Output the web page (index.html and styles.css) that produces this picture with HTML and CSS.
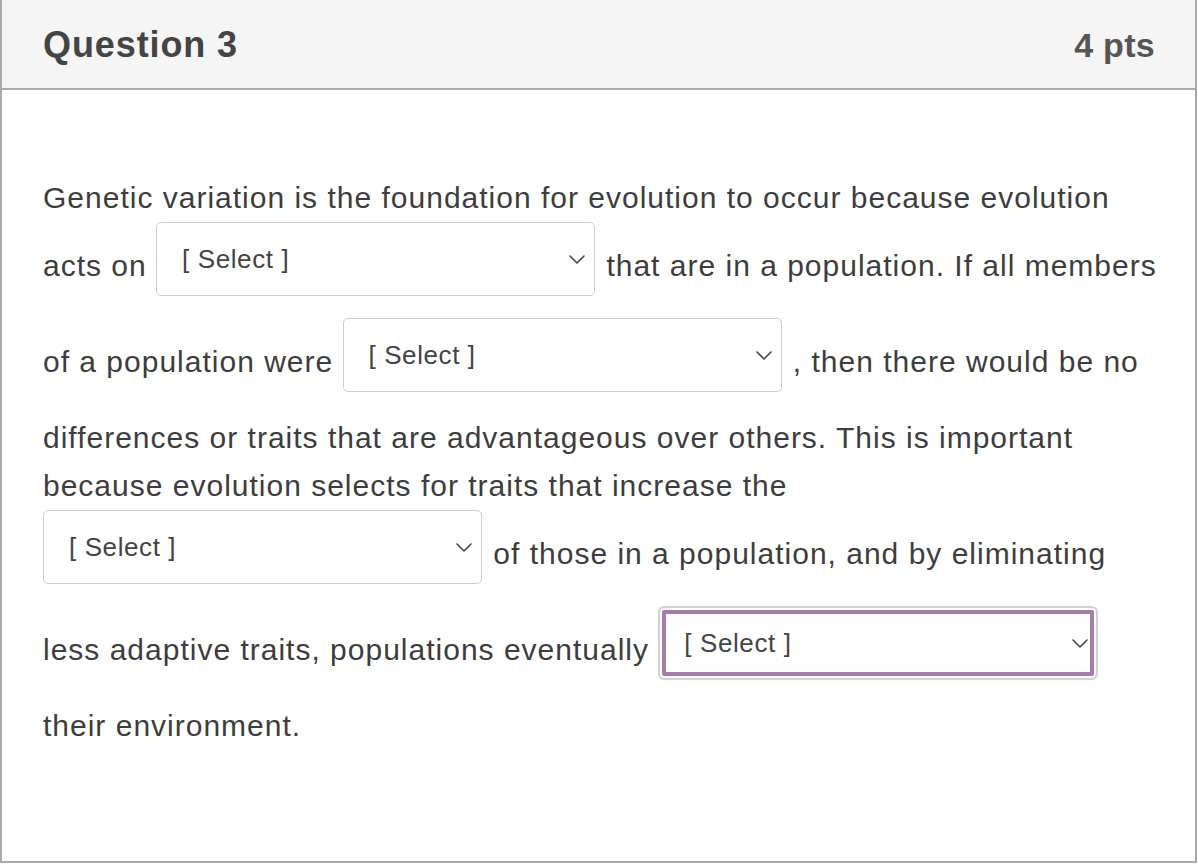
FILE: index.html
```html
<!DOCTYPE html>
<html lang="en">
<head>
<meta charset="utf-8">
<title>Question 3</title>
<link rel="stylesheet" href="styles.css">
</head>
<body>
<div class="card">
  <div class="card-header">
    <h2 class="title">Question 3</h2>
    <span class="pts">4 pts</span>
  </div>
  <div class="card-body">
    <p class="question">Genetic variation is the foundation for evolution to occur because evolution acts on <span class="select"><span class="select-text">[ Select ]</span><svg class="chev" viewBox="0 0 16 9" width="16" height="9"><polyline points="1,1 8,8 15,1"/></svg></span> that are in a population. If all members of a population were <span class="select"><span class="select-text">[ Select ]</span><svg class="chev" viewBox="0 0 16 9" width="16" height="9"><polyline points="1,1 8,8 15,1"/></svg></span> , then there would be no differences or traits that are advantageous over others. This is important because evolution selects for traits that increase the <span class="select"><span class="select-text">[ Select ]</span><svg class="chev" viewBox="0 0 16 9" width="16" height="9"><polyline points="1,1 8,8 15,1"/></svg></span> of those in a population, and by eliminating less adaptive traits, populations eventually <span class="select focused"><span class="select-text">[ Select ]</span><svg class="chev" viewBox="0 0 16 9" width="16" height="9"><polyline points="1,1 8,8 15,1"/></svg></span> their environment.</p>
  </div>
</div>
</body>
</html>
```
FILE: styles.css
```css
html, body {
  margin: 0;
  padding: 0;
  background: #ffffff;
}

body {
  font-family: "Liberation Sans", Arial, sans-serif;
  color: #3d3d3d;
}

.card {
  box-sizing: border-box;
  width: 1197px;
  height: 863px;
  border: 2px solid #aaaaaa;
  border-top: none;
  background: #ffffff;
}

.card-header {
  box-sizing: border-box;
  height: 90px;
  background: #f5f5f5;
  border-bottom: 2px solid #aaaaaa;
  display: flex;
  align-items: center;
  justify-content: space-between;
  padding: 2px 40px 0 41px;
}

.title {
  margin: 0;
  font-size: 36px;
  font-weight: bold;
  letter-spacing: 0.9px;
  color: #444444;
}

.pts {
  font-size: 34px;
  font-weight: bold;
  color: #555555;
  letter-spacing: 0.3px;
}

.card-body {
  padding: 84px 30px 0 41px;
}

.question {
  margin: 0;
  font-size: 30px;
  line-height: 48px;
  letter-spacing: 1px;
}

.select {
  box-sizing: border-box;
  display: inline-flex;
  align-items: center;
  width: 439px;
  height: 74px;
  margin: 0 2px 22px 0;
  padding: 0 9px 0 25px;
  border: 1px solid #c8cdd1;
  border-radius: 5px;
  background: #ffffff;
  vertical-align: 8px;
  letter-spacing: 0;
}

.select-text {
  font-size: 26px;
  color: #444444;
  line-height: 30px;
  letter-spacing: 0.6px;
}

.chev {
  margin-left: auto;
  fill: none;
  stroke: #444444;
  stroke-width: 1.6;
  stroke-linecap: round;
  stroke-linejoin: round;
}

.select.focused {
  width: 440px;
  border: 2px solid #d2d2d2;
  border-radius: 6px;
  padding: 0 8px 0 24px;
  box-shadow: inset 0 0 0 2px #ffffff, inset 0 0 0 6px #a87bae;
}
```
